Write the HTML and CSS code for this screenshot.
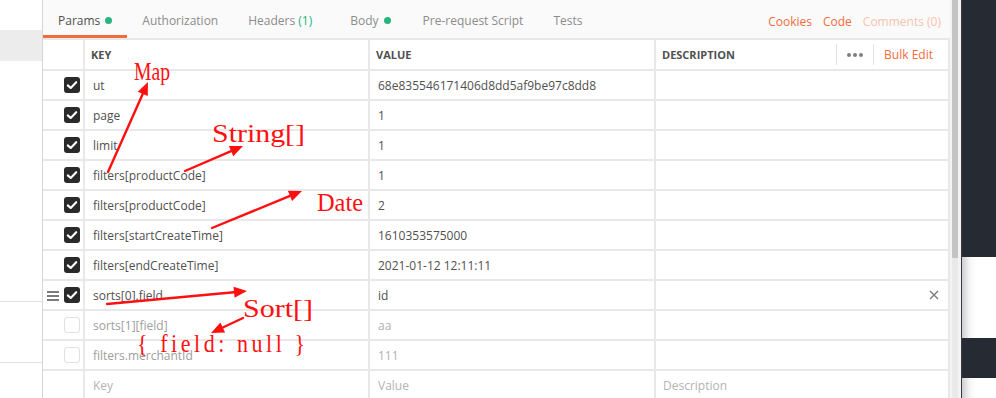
FILE: index.html
```html
<!DOCTYPE html>
<html>
<head>
<meta charset="utf-8">
<link rel="stylesheet" href="styles.css">
</head>
<body>
<div class="app">
  <aside class="sidebar">
    <div class="sel"></div>
    <div class="line1"></div>
    <div class="line2"></div>
  </aside>
  <main class="main">
    <nav class="tabs">
      <div class="tab active">Params<span class="dot"></span></div>
      <div class="tab">Authorization</div>
      <div class="tab tab-headers">Headers <span class="green">&nbsp;(1)</span></div>
      <div class="tab tab-body">Body<span class="dot"></span></div>
      <div class="tab">Pre-request Script</div>
      <div class="tab">Tests</div>
      <div class="spacer"></div>
      <div class="links">
        <span class="link">Cookies</span>
        <span class="link">Code</span>
        <span class="link pale">Comments (0)</span>
      </div>
    </nav>
    <div class="grid">
      <div class="cell hdr"></div>
      <div class="cell hdr">KEY</div>
      <div class="cell hdr">VALUE</div>
      <div class="cell hdr">DESCRIPTION
        <div class="hdr-actions">
          <div class="dots"><i></i><i></i><i></i></div>
          <div class="bulk">Bulk Edit</div>
        </div>
      </div>

      <div class="cell chk"><span class="cb on"></span></div>
      <div class="cell">ut</div>
      <div class="cell">68e835546171406d8dd5af9be97c8dd8</div>
      <div class="cell"></div>

      <div class="cell chk"><span class="cb on"></span></div>
      <div class="cell">page</div>
      <div class="cell">1</div>
      <div class="cell"></div>

      <div class="cell chk"><span class="cb on"></span></div>
      <div class="cell">limit</div>
      <div class="cell">1</div>
      <div class="cell"></div>

      <div class="cell chk"><span class="cb on"></span></div>
      <div class="cell">filters[productCode]</div>
      <div class="cell">1</div>
      <div class="cell"></div>

      <div class="cell chk"><span class="cb on"></span></div>
      <div class="cell">filters[productCode]</div>
      <div class="cell">2</div>
      <div class="cell"></div>

      <div class="cell chk"><span class="cb on"></span></div>
      <div class="cell">filters[startCreateTime]</div>
      <div class="cell">1610353575000</div>
      <div class="cell"></div>

      <div class="cell chk"><span class="cb on"></span></div>
      <div class="cell">filters[endCreateTime]</div>
      <div class="cell">2021-01-12 12:11:11</div>
      <div class="cell"></div>

      <div class="cell chk"><span class="handle"><i></i><i></i><i></i></span><span class="cb on"></span></div>
      <div class="cell">sorts[0].field</div>
      <div class="cell">id</div>
      <div class="cell desc-x">
        <svg class="xicon" width="10" height="10" viewBox="0 0 10 10"><path d="M1 1 L9 9 M9 1 L1 9" stroke="#7a7a7a" stroke-width="1.4" fill="none"/></svg>
      </div>

      <div class="cell chk"><span class="cb off"></span></div>
      <div class="cell off-key">sorts[1][field]</div>
      <div class="cell off-val">aa</div>
      <div class="cell"></div>

      <div class="cell chk"><span class="cb off"></span></div>
      <div class="cell off-key">filters.merchantId</div>
      <div class="cell off-val">111</div>
      <div class="cell"></div>

      <div class="cell chk"></div>
      <div class="cell ph">Key</div>
      <div class="cell ph">Value</div>
      <div class="cell ph desc-ph">Description</div>
    </div>
  </main>
  <div class="scroll">
    <div class="thumb"></div>
    <div class="track"></div>
  </div>
  <div class="dark">
    <div class="d1"></div>
    <div class="w1"></div>
    <div class="d2"></div>
    <div class="w2"></div>
  </div>

  <svg class="annot" width="996" height="398" viewBox="0 0 996 398">
    <g stroke="#ff1010" stroke-width="2.4" fill="none" stroke-linecap="round">
      <line x1="108" y1="172" x2="142.7" y2="93.9"/>
      <line x1="185" y1="171" x2="231.1" y2="151.2"/>
      <line x1="212" y1="228" x2="290" y2="195.9"/>
      <line x1="107" y1="304" x2="234" y2="292.2"/>
      <line x1="243" y1="318" x2="222.8" y2="327.5"/>
    </g>
    <g fill="#ff1010">
      <polygon points="148,82 147.75,96.11 137.69,91.65"/>
      <polygon points="243,146 233.25,156.2 228.89,146.1"/>
      <polygon points="302,191 292.07,201.03 287.89,190.85"/>
      <polygon points="247,291 234.56,297.68 233.54,286.72"/>
      <polygon points="211,333 225.12,332.45 220.44,322.49"/>
    </g>
    <g class="atext" fill="#ff1010">
      <text transform="translate(134,80) scale(1,1.1)" textLength="36" lengthAdjust="spacingAndGlyphs">Map</text>
      <text transform="translate(212,142) scale(1,1.1)" textLength="93" lengthAdjust="spacingAndGlyphs">String[]</text>
      <text transform="translate(317,211) scale(1,1.1)" textLength="46" lengthAdjust="spacingAndGlyphs">Date</text>
      <text transform="translate(243,317) scale(1,1.1)" textLength="70" lengthAdjust="spacingAndGlyphs">Sort[]</text>
      <text transform="translate(137,352) scale(1,1.1)" textLength="168" lengthAdjust="spacing">{ field: null }</text>
    </g>
  </svg>
</div>
</body>
</html>
```

FILE: styles.css
```css
* { box-sizing: border-box; }
body {
  margin: 0;
  font-family: "Open Sans", "Liberation Sans", sans-serif;
  font-size: 12px;
  color: #505050;
  background: #fff;
}
.app {
  position: relative;
  display: flex;
  width: 996px;
  height: 398px;
  overflow: hidden;
}

/* left sidebar */
.sidebar {
  flex: none;
  width: 43px;
  border-right: 1px solid #d6d6d6;
  background: #fff;
}
.sidebar .sel {
  margin-top: 30px;
  height: 31px;
  background: #ececec;
}
.sidebar .line1 {
  margin-top: 240px;
  border-top: 1px solid #e2e2e2;
}
.sidebar .line2 {
  margin-top: 60px;
  border-top: 1px solid #e2e2e2;
}

/* main panel */
.main {
  flex: none;
  width: 907px;
  background: #fafafa;
}
.tabs {
  height: 38px;
  display: flex;
  align-items: stretch;
}
.tab {
  position: relative;
  display: flex;
  align-items: center;
  padding: 3px 15px 0;
  color: #8c8c8c;
  white-space: nowrap;
}
.tab.active { color: #505050; }
.tab.active::after {
  content: "";
  position: absolute;
  left: 0;
  right: 0;
  bottom: 0;
  height: 3px;
  background: #f26b3a;
}
.tab-headers { padding-right: 23px; }
.tab-body { padding-right: 17px; }
.dot {
  display: inline-block;
  width: 7px;
  height: 7px;
  margin-left: 5px;
  border-radius: 50%;
  background: #26b47f;
}
.green { color: #26b47f; }
.spacer { flex: 1; }
.links {
  display: flex;
  align-items: center;
  gap: 11px;
  padding: 5px 9px 0 0;
}
.link { color: #f26b3a; }
.link.pale { color: #f9c3ad; }

/* table */
.grid {
  display: grid;
  grid-template-columns: 40px 283px 284px 292px;
  grid-template-rows: 29px;
  grid-auto-rows: 28px;
  gap: 2px;
  padding: 2px 2px 0 0;
  background: #e8e8e8;
}
.cell {
  background: #fff;
  display: flex;
  align-items: center;
  padding-left: 8px;
  white-space: nowrap;
  color: #505050;
}
.cell.hdr {
  padding-left: 6px;
  font-size: 11px;
  font-weight: 700;
  color: #505050;
}
.hdr-actions {
  margin-left: auto;
  display: flex;
  align-items: center;
  font-weight: 400;
  font-size: 12px;
}
.dots {
  width: 38px;
  height: 21px;
  border-left: 1px solid #e2e2e2;
  border-right: 1px solid #e2e2e2;
  display: flex;
  align-items: center;
  justify-content: center;
  gap: 2px;
}
.dots i {
  width: 4px;
  height: 4px;
  border-radius: 50%;
  background: #808080;
}
.bulk {
  color: #f26b3a;
  padding: 0 15px 0 10px;
}

.cell.chk {
  padding: 0 3px 0 0;
  justify-content: flex-end;
  position: relative;
}
.cb {
  width: 16px;
  height: 16px;
  border-radius: 3px;
  display: block;
}
.cb.on {
  background: #2a2a2a url("data:image/svg+xml;utf8,<svg xmlns='http://www.w3.org/2000/svg' width='16' height='16' viewBox='0 0 16 16'><path d='M3.8 8.4 L6.7 11 L12.2 5.2' stroke='white' stroke-width='2.1' fill='none' stroke-linecap='round' stroke-linejoin='round'/></svg>") center/16px 16px no-repeat;
}
.cb.off {
  background: #fff;
  border: 1px solid #e0e0e0;
}
.handle {
  position: absolute;
  left: 4px;
  top: 10px;
  width: 12px;
  height: 10px;
  display: flex;
  flex-direction: column;
  justify-content: space-between;
}
.handle i {
  display: block;
  height: 2px;
  background: #7a7a7a;
}
.off-key { color: #9e9e9e; }
.off-val { color: #b0b0b0; }
.ph { color: #b3b3b3; }
.desc-ph { padding-left: 7px; }
.desc-x {
  justify-content: flex-end;
  padding-right: 9px;
}
.xicon { display: block; }

/* scrollbar */
.scroll {
  flex: none;
  width: 12px;
  display: flex;
  flex-direction: column;
  background: #f3f3f3;
  border-right: 1px solid #3a3d44;
  padding-left: 2px;
  padding-right: 3px;
}
.thumb {
  height: 258px;
  background: #c4c4c4;
}
.track {
  flex: 1;
  background: #e9e9e9;
}

/* right dark region */
.dark {
  flex: 1;
  display: flex;
  flex-direction: column;
}
.d1 { height: 257px; background: #262a33; }
.w1 {
  height: 81px;
  background: linear-gradient(to right, #cfcfcf, #f6f6f6 8px, #fff 14px);
}
.d2 { height: 40px; background: #262a33; }
.w2 {
  flex: 1;
  background: linear-gradient(to right, #cfcfcf, #f6f6f6 8px, #fff 14px);
}

/* annotations overlay */
.annot {
  position: absolute;
  left: 0;
  top: 0;
  pointer-events: none;
}
.atext text {
  font-family: "Liberation Serif", "DejaVu Serif", serif;
  font-size: 22px;
}
```
